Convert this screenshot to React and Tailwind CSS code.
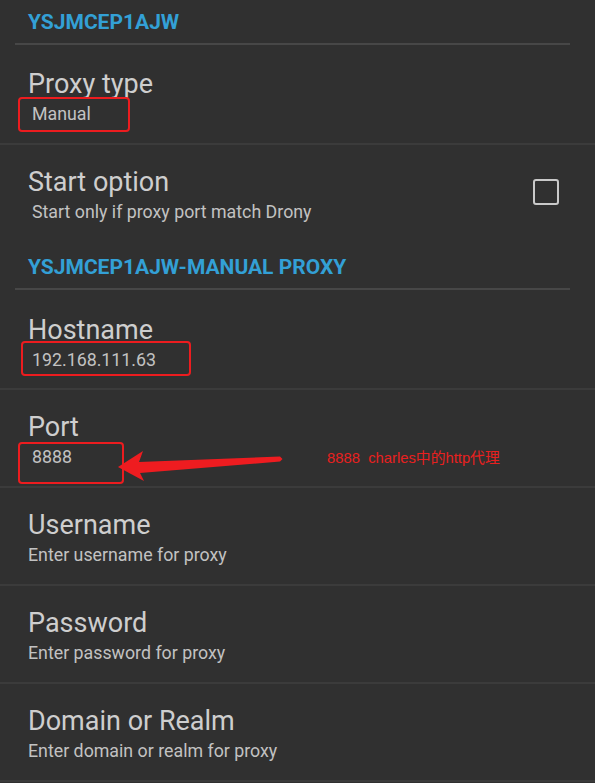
const rows = [
  { title: "Hostname", sub: "192.168.111.63", inset: true, h: "h-[98px]", pt: "pt-[25px]", box: "top-[51px] left-[21px] w-[170px] h-[35px]" },
  { title: "Port", sub: "8888", inset: true, h: "h-[96px]", pt: "pt-[22px]", box: "top-[52px] left-[18px] w-[106px] h-[42px]" },
  { title: "Username", sub: "Enter username for proxy", h: "h-[96px]", pt: "pt-[22px]" },
  { title: "Password", sub: "Enter password for proxy", h: "h-[96px]", pt: "pt-[22px]" },
  { title: "Domain or Realm", sub: "Enter domain or realm for proxy", h: "h-[96px]", pt: "pt-[22px]" },
];

function Category({ label }) {
  return (
    <div>
      <div className="h-[43px] pl-[28px] pt-[10px] text-[21px] leading-[24px] font-bold text-[#33a0d6]">{label}</div>
      <div className="ml-[15px] w-[555px] h-[2px] bg-[#474747]" />
    </div>
  );
}

function Divider() {
  return <div className="h-[2px] bg-[#3b3b3b]" />;
}

function Pref({ title, sub, inset, h, pt, box }) {
  return (
    <div className={`relative pl-[28px] ${h} ${pt}`}>
      <p className="text-[27px] leading-[30px] text-[#cecece]">{title}</p>
      <p className={`mt-[4px] text-[17.8px] leading-[22px] text-[#c2c2c2] ${inset ? "pl-[4px]" : ""}`}>{sub}</p>
      {box && <div className={`absolute ${box} border-[2.5px] border-[#ec1c1f] rounded-[4px]`} />}
    </div>
  );
}

export default function App() {
  return (
    <div className="relative w-[595px] h-[783px] overflow-hidden bg-[#303030] font-['Roboto',sans-serif]">
      <Category label="YSJMCEP1AJW" />

      {/* Proxy type */}
      <div className="relative pl-[28px] h-[98px] pt-[24px]">
        <p className="text-[27px] leading-[30px] text-[#cecece]">Proxy type</p>
        <p className="mt-[4px] pl-[4px] text-[17.8px] leading-[22px] text-[#c2c2c2]">Manual</p>
        <div className="absolute top-[52px] left-[18px] w-[112px] h-[35px] border-[2.5px] border-[#ec1c1f] rounded-[4px]" />
      </div>
      <Divider />

      {/* Start option */}
      <div className="flex h-[100px] pl-[28px] pr-[36px] pt-[22px]">
        <div className="flex-1">
          <p className="text-[27px] leading-[30px] text-[#cecece]">Start option</p>
          <p className="mt-[4px] pl-[4px] text-[17.8px] leading-[22px] text-[#c2c2c2]">Start only if proxy port match Drony</p>
        </div>
        <div className="mt-[12px] w-[26px] h-[26px] border-[2.5px] border-[#c9c9c9] rounded-[3px]" />
      </div>

      <Category label="YSJMCEP1AJW-MANUAL PROXY" />

      {rows.map((r, i) => (
        <div key={i}>
          <Pref {...r} />
          <Divider />
        </div>
      ))}

      {/* annotation */}
      <svg className="absolute left-0 top-0" width="595" height="783" viewBox="0 0 595 783">
        <polygon
          points="118,467 143,451 139,462 280,456.5 282.5,459 280,461.5 140,473 144,481"
          fill="#ee1c20"
        />
      </svg>
      <div className="absolute left-[327px] top-[449px] text-[14.8px] leading-[18px] text-[#e8201f] font-['Liberation_Sans','Noto_Sans_CJK_SC',sans-serif] whitespace-pre">
        8888  charles中的http代理
      </div>
    </div>
  );
}
